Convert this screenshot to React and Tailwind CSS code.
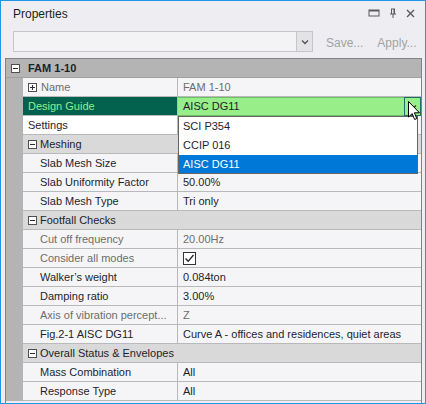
import React from "react";

const rows = [
  { type: "cat", label: "FAM 1-10" },
  { type: "prop", label: "Name", value: "FAM 1-10", expand: true, dim: true },
  { type: "prop", label: "Design Guide", value: "AISC DG11", active: true },
  { type: "prop", label: "Settings", value: "", plain: true },
  { type: "sub", label: "Meshing" },
  { type: "prop", label: "Slab Mesh Size", value: "", indent: true },
  { type: "prop", label: "Slab Uniformity Factor", value: "50.00%", indent: true },
  { type: "prop", label: "Slab Mesh Type", value: "Tri only", indent: true },
  { type: "sub", label: "Footfall Checks" },
  { type: "prop", label: "Cut off frequency", value: "20.00Hz", indent: true, dim: true },
  { type: "prop", label: "Consider all modes", check: true, indent: true, dim: true },
  { type: "prop", label: "Walker\u2019s weight", value: "0.084ton", indent: true },
  { type: "prop", label: "Damping ratio", value: "3.00%", indent: true },
  { type: "prop", label: "Axis of vibration percept...", value: "Z", indent: true, dim: true },
  { type: "prop", label: "Fig.2-1 AISC DG11", value: "Curve A - offices and residences, quiet areas", indent: true },
  { type: "sub", label: "Overall Status & Envelopes" },
  { type: "prop", label: "Mass Combination", value: "All", indent: true },
  { type: "prop", label: "Response Type", value: "All", indent: true },
];

function ToggleBox({ plus }) {
  return (
    <span className="w-[9px] h-[9px] border border-[#505050] bg-white flex items-center justify-center shrink-0 relative">
      <span className="absolute w-[5px] h-px bg-[#303030]" />
      {plus && <span className="absolute w-px h-[5px] bg-[#303030]" />}
    </span>
  );
}

function Row({ row }) {
  if (row.type === "cat") {
    return (
      <div className="h-[19px] flex items-center bg-[#b4b4b4] border-b border-[#a0a0a0] shrink-0">
        <div className="w-[22px] pl-[5px] flex items-center">
          <ToggleBox />
        </div>
        <span className="font-bold text-[#1e1e2e]">{row.label}</span>
      </div>
    );
  }
  if (row.type === "sub") {
    return (
      <div className="h-[19px] flex shrink-0">
        <div className="w-[17px] bg-[#b4b4b4] shrink-0" />
        <div className="flex-1 flex items-center bg-[#d9d9d9] border-b border-[#b9b9b9] pl-[5px] gap-[3px]">
          <ToggleBox />
          <span className="text-[#1e1e2e]">{row.label}</span>
        </div>
      </div>
    );
  }
  const nameText = row.active ? "text-[#90ee90]" : row.dim ? "text-[#6d6d6d]" : "text-[#1e1e2e]";
  return (
    <div className="h-[19px] flex shrink-0">
      <div className="w-[17px] bg-[#b4b4b4] shrink-0" />
      <div
        className={
          "w-[155px] shrink-0 flex items-center border-b border-r border-[#b9b9b9] " +
          (row.active ? "bg-[#03624e] " : row.plain ? "bg-white " : "bg-[#f5f5f7] ") +
          (row.indent ? "pl-[17px]" : "pl-[5px]")
        }
      >
        {row.expand && (
          <span className="mr-[4px] flex">
            <ToggleBox plus />
          </span>
        )}
        <span className={nameText + " whitespace-nowrap"}>{row.label}</span>
      </div>
      <div
        className={
          "flex-1 flex items-center pl-[5px] border-b relative " +
          (row.active ? "bg-[#98ee88] border-[#6fbf66] border-t" : "bg-[#f5f5f7] border-[#b9b9b9]")
        }
      >
        {row.check ? (
          <span className="w-[13px] h-[13px] border border-[#333] bg-white flex items-center justify-center">
            <svg width="11" height="11" viewBox="0 0 11 11">
              <path d="M1.5 5.5 L4.2 8.3 L9.5 2" fill="none" stroke="#222" strokeWidth="1.3" />
            </svg>
          </span>
        ) : (
          <span className={(row.dim ? "text-[#6d6d6d]" : "text-[#1e1e2e]") + " whitespace-nowrap"}>{row.value}</span>
        )}
        {row.active && (
          <span className="absolute right-0 top-[-1px] w-[17px] h-[19px] border border-[#1f6e6a] flex items-center justify-center">
            <svg width="8" height="6" viewBox="0 0 8 6">
              <path d="M1 1.5 L4 4.5 L7 1.5" fill="none" stroke="#333" strokeWidth="1.3" />
            </svg>
          </span>
        )}
      </div>
    </div>
  );
}

export default function App() {
  return (
    <div className="w-[426px] h-[404px] border border-[#1c97ea] bg-[#eeeef2] overflow-hidden relative flex flex-col font-['Liberation_Sans',Arial,sans-serif] text-[11px]">
      {/* title bar */}
      <div className="h-[24px] flex items-center pl-[12px] pr-[10px] shrink-0">
        <span className="text-[12px] text-[#1e1e1e] flex-1 pt-[2px]">Properties</span>
        <div className="flex items-center gap-[9px] text-[#6a6a6a]">
          <svg width="12" height="8" viewBox="0 0 12 8">
            <rect x="1" y="1" width="10" height="6" fill="none" stroke="#5a5a5a" strokeWidth="1" />
            <rect x="1" y="1" width="10" height="1.5" fill="#5a5a5a" />
          </svg>
          <svg width="8" height="10" viewBox="0 0 8 10">
            <path d="M2 1 H6 M2.5 1 V6 M5.5 1 V6 M1 6 H7 M4 6 V10" fill="none" stroke="#5a5a5a" strokeWidth="1" />
            <rect x="4.5" y="1" width="1.2" height="5" fill="#5a5a5a" />
          </svg>
          <svg width="9" height="9" viewBox="0 0 9 9">
            <path d="M1 1 L8 8 M8 1 L1 8" stroke="#5a5a5a" strokeWidth="1.4" />
          </svg>
        </div>
      </div>
      {/* toolbar */}
      <div className="h-[33px] flex items-start pt-[6px] pl-[12px] shrink-0">
        <div className="w-[300px] h-[21px] border border-[#c5c5cc] bg-[#f3f3f6] flex justify-end">
          <div className="w-[16px] h-full bg-[#e3e3e6] border-l border-[#c5c5cc] flex items-center justify-center">
            <svg width="8" height="6" viewBox="0 0 8 6">
              <path d="M1 1.5 L4 4.5 L7 1.5" fill="none" stroke="#555" strokeWidth="1.4" />
            </svg>
          </div>
        </div>
        <span className="ml-[13px] mt-[3px] text-[12px] text-[#a2a2a2]">Save...</span>
        <span className="ml-[14px] mt-[3px] text-[12px] text-[#a2a2a2]">Apply...</span>
      </div>
      {/* property grid */}
      <div className="ml-[4px] mr-[3px] flex-1 border-l border-r border-t border-[#828282] flex flex-col overflow-hidden">
        {rows.map((r, i) => (
          <Row key={i} row={r} />
        ))}
      </div>

      {/* open dropdown list */}
      <div className="absolute left-[177px] top-[115px] w-[240px] h-[58px] border border-[#646464] bg-white flex flex-col">
        <div className="h-[19px] flex items-center pl-[4px] text-[#1e1e2e]">SCI P354</div>
        <div className="h-[19px] flex items-center pl-[4px] text-[#1e1e2e]">CCIP 016</div>
        <div className="h-[18px] flex items-center pl-[4px] bg-[#0078d7] text-white">AISC DG11</div>
      </div>

      {/* mouse cursor */}
      <svg className="absolute left-[407px] top-[100px]" width="13" height="21" viewBox="0 0 13 21">
        <path d="M0.5 0.5 L0.5 16 L4.2 12.6 L6.6 18.5 L8.8 17.6 L6.4 11.8 L11.5 11.8 Z" fill="white" stroke="black" strokeWidth="1" strokeLinejoin="round" />
      </svg>
    </div>
  );
}
